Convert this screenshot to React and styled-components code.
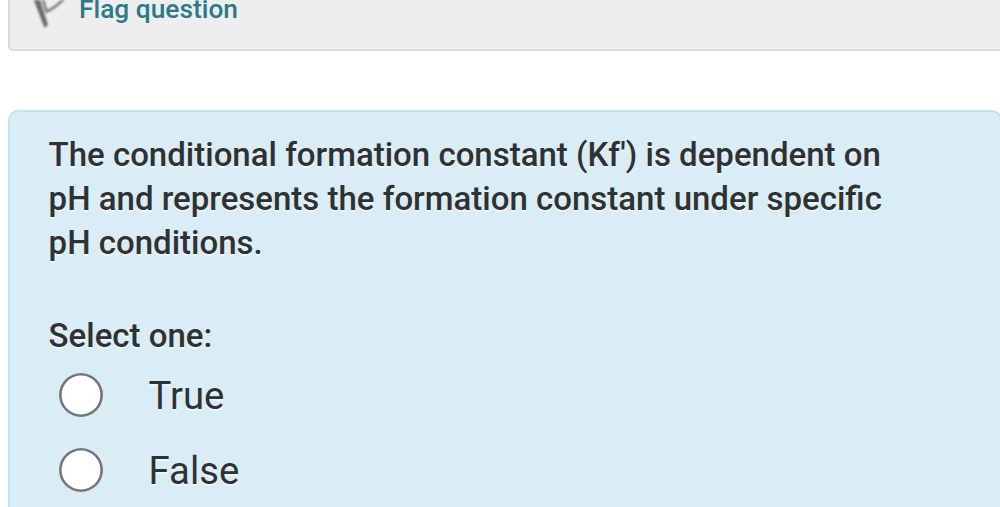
import React from "react";
import styled, { createGlobalStyle } from "styled-components";

const GlobalStyle = createGlobalStyle`
  * {
    box-sizing: border-box;
  }
  body {
    margin: 0;
    overflow: hidden;
    background-color: #fff;
    font-family: Roboto, sans-serif;
    color: #2f3133;
  }
`;

const Page = styled.main`
  height: 507px;
  padding-left: 8px;
  overflow: hidden;
`;

const InfoBox = styled.section`
  height: 51px;
  display: flex;
  align-items: flex-start;
  padding-left: 20px;
  background-color: #eee;
  border: 2px solid #dadada;
  border-top: 0;
  border-right: 0;
  border-bottom-left-radius: 5px;
`;

const FlagIcon = styled.svg`
  width: 49px;
  height: 32px;
  flex: none;
  filter: blur(0.8px);
`;

const FlagLink = styled.a`
  color: #2a7a8a;
  font-size: 26.3px;
  font-weight: 500;
  line-height: 30px;
  margin-top: -6px;
`;

const QuestionCard = styled.section`
  width: 994px;
  height: 420px;
  margin-top: 59px;
  padding: 21px 0 0 38.6px;
  background-color: #d9edf6;
  border: 2px solid #c3e5e9;
  border-radius: 10px;
  text-shadow: 0 2px 0 rgba(255, 255, 255, 0.5);
`;

const QuestionText = styled.p`
  margin: 0;
  font-size: 33px;
  font-weight: 500;
  line-height: 44px;
`;

const Prompt = styled.div`
  margin-top: 49px;
  font-size: 33px;
  font-weight: 500;
  line-height: 44px;
`;

const Answer = styled.label`
  height: 75px;
  display: flex;
  align-items: center;
  padding-left: 10.4px;
  font-size: 38.3px;
`;

const Radio = styled.input`
  appearance: none;
  width: 44px;
  height: 44px;
  margin: 0 45.6px 2px 0;
  border-radius: 50%;
  background-color: #fff;
  box-shadow: inset 0 0 0 2.6px #767676;
`;

const App = () => {
  return (
    <>
      <GlobalStyle />
      <Page>
        <InfoBox>
          <FlagIcon viewBox="0 0 49 32">
            <path d="M3 -2L9.5 -2L18 25L14.5 28Z" fill="#6c6c6c" />
            <path
              d="M12.5 -2L16.5 11.5Q25 8 34 -1"
              fill="none"
              stroke="#7c7c7c"
              strokeWidth="2.6"
            />
          </FlagIcon>
          <FlagLink>Flag question</FlagLink>
        </InfoBox>
        <QuestionCard>
          <QuestionText>
            The conditional formation constant (Kf') is dependent on
            <br />
            pH and represents the formation constant under specific
            <br />
            pH conditions.
          </QuestionText>
          <Prompt>Select one:</Prompt>
          <Answer>
            <Radio type="radio" name="answer" />
            True
          </Answer>
          <Answer>
            <Radio type="radio" name="answer" />
            False
          </Answer>
        </QuestionCard>
      </Page>
    </>
  );
};

export default App;
